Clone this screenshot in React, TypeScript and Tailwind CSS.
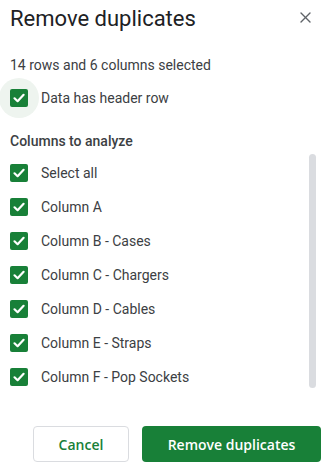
import { useState } from "react";

const columns = [
    "Select all",
    "Column A",
    "Column B - Cases",
    "Column C - Chargers",
    "Column D - Cables",
    "Column E - Straps",
    "Column F - Pop Sockets",
];

const CheckBox = ({ checked }: { checked: boolean }) => (
    <span className={`flex items-center justify-center w-[18px] h-[18px] rounded-[2px] shrink-0 ${checked ? "bg-[#188038]" : "border-2 border-[#5f6368]"}`}>
        {checked && (
            <svg width="14" height="14" viewBox="0 0 14 14" fill="none" stroke="#fff" strokeWidth="2.2" strokeLinecap="round" strokeLinejoin="round">
                <polyline points="2.5 7.3 5.6 10.2 11.6 3.8" />
            </svg>
        )}
    </span>
);

export default function App() {
    const [header, setHeader] = useState(true);
    const [checked, setChecked] = useState<boolean[]>(columns.map(() => true));

    const toggle = (i: number) => {
        setChecked((prev) => prev.map((v, idx) => (idx === i ? !v : v)));
    };

    return (
        <div className="w-[329px] h-[469px] bg-white overflow-hidden text-[#3c4043]" style={{ fontFamily: "Roboto, 'Liberation Sans', sans-serif" }}>
            <div className="flex items-start justify-between pl-[10px] pr-[18px] pt-[5px]">
                <h1 className="text-[22px] leading-[28px] text-[#202124]">Remove duplicates</h1>
                <button className="mt-[7px] text-[#5f6368]" aria-label="Close">
                    <svg width="11" height="11" viewBox="0 0 11 11" fill="none" stroke="currentColor" strokeWidth="1.4" strokeLinecap="round">
                        <line x1="1" y1="1" x2="10" y2="10" />
                        <line x1="10" y1="1" x2="1" y2="10" />
                    </svg>
                </button>
            </div>

            <p className="pl-[10px] mt-[22px] text-[14px] leading-[20px]">14 rows and 6 columns selected</p>

            <label className="relative flex items-center h-[40px] mt-[3px] pl-[10px] cursor-pointer" onClick={() => setHeader(!header)}>
                <span className="absolute left-[-1px] top-0 w-[40px] h-[40px] rounded-full bg-[#eef4ef]" />
                <span className="relative">
                    <CheckBox checked={header} />
                </span>
                <span className="relative ml-[13px] text-[14px]">Data has header row</span>
            </label>

            <p className="pl-[10px] mt-[13px] text-[14px] leading-[20px] font-medium text-[#3c4043]">Columns to analyze</p>

            <div className="flex h-[234px] mt-[3px] pl-[10px] pr-[13px]">
                <div className="flex-1 pt-[2px]">
                    {columns.map((c, i) => (
                        <div key={c} className="flex items-center h-[34px] cursor-pointer" onClick={() => toggle(i)}>
                            <CheckBox checked={checked[i]} />
                            <span className="ml-[13px] text-[14px]">{c}</span>
                        </div>
                    ))}
                </div>
                <div className="w-[7px] h-full rounded-full bg-[#dadce0]" />
            </div>

            <div className="flex justify-end gap-[13px] pr-[8px] mt-[38px]" style={{ fontFamily: "'Open Sans', Roboto, sans-serif" }}>
                <button className="w-[96px] h-[36px] rounded-[4px] border border-[#dadce0] text-[14px] font-semibold text-[#188038]">Cancel</button>
                <button className="w-[179px] h-[36px] rounded-[4px] bg-[#188038] text-[14px] font-semibold text-white">Remove duplicates</button>
            </div>
        </div>
    );
}
